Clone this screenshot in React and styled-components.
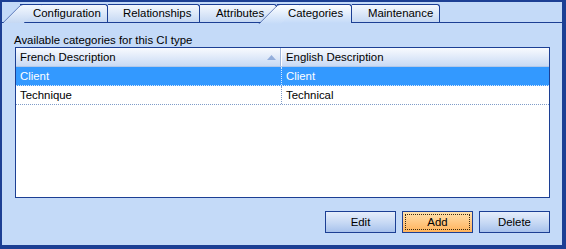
import React from "react";
import styled, { createGlobalStyle, css } from "styled-components";

const navy = "#1c3f94";
const panelBlue = "#c4daf8";

const GlobalStyle = createGlobalStyle`
  html, body {
    margin: 0;
    padding: 0;
    background: ${panelBlue};
  }
  * {
    box-sizing: border-box;
  }
`;

const Frame = styled.div`
  width: 566px;
  height: 249px;
  display: flex;
  flex-direction: column;
  border-style: solid;
  border-color: ${navy};
  border-width: 2px 4px 4px 2px;
  background: ${panelBlue};
  font-family: "Liberation Sans", Arial, sans-serif;
  font-size: 11.4px;
  color: #000;
`;

const TabStrip = styled.div`
  height: 20px;
  display: flex;
  align-items: flex-end;
  padding-left: 18px;
  position: relative;
  z-index: 1;
`;

const Tab = styled.div`
  position: relative;
  z-index: ${(p) => (p.$active ? 3 : 1)};
  width: ${(p) => p.$w}px;
  height: ${(p) => (p.$active ? 19 : 18)}px;
  margin-bottom: ${(p) => (p.$active ? -1 : 0)}px;
  padding-left: ${(p) => p.$pad}px;
  border-top: 1px solid ${navy};
  border-right: 1px solid ${navy};
  border-top-right-radius: 3px;
  line-height: 16px;
  white-space: nowrap;
  background: ${(p) =>
    p.$active
      ? `linear-gradient(#fdfeff, ${panelBlue})`
      : "linear-gradient(#f4f8fe, #c5d8f3)"};

  ${(p) =>
    p.$slant &&
    css`
      &::before {
        content: "";
        position: absolute;
        z-index: -1;
        top: -1px;
        left: -${p.$active ? 19 : 18}px;
        width: ${p.$active ? 22 : 21}px;
        height: ${p.$active ? 19 : 18}px;
        border-top: 1px solid ${navy};
        border-left: 1.4px solid ${navy};
        border-top-left-radius: 3px;
        background: inherit;
        transform-origin: bottom left;
        transform: skewX(-45deg);
      }
    `}
`;

const Panel = styled.div`
  flex: 1;
  display: flex;
  flex-direction: column;
  border-top: 1px solid ${navy};
  padding: 10px 12px 12px 12px;
`;

const Caption = styled.div`
  line-height: 14px;
  height: 14px;
`;

const ListView = styled.div`
  height: 151px;
  margin-left: 1px;
  border: 1px solid ${navy};
  background: #fff;
  display: flex;
  flex-direction: column;
`;

const Columns = styled.div`
  display: grid;
  grid-template-columns: 266px 1fr;
`;

const Header = styled(Columns)`
  height: 19px;
  background: linear-gradient(#f8fafe, #dce7f8 60%, #c9daf4);
  border-bottom: 1px solid #b3c8e8;
`;

const HeadCell = styled.div`
  display: flex;
  align-items: center;
  justify-content: space-between;
  padding: 0 5px 0 4px;
  line-height: 18px;
  ${(p) =>
    p.$divider &&
    css`
      box-shadow: inset -1px 0 0 #9fb6dc;
      border-right: 1px solid #ffffff;
    `}
`;

const SortArrow = styled.svg`
  width: 9px;
  height: 5px;
  margin-top: 1px;
`;

const Row = styled(Columns)`
  height: 19px;
  background: ${(p) => (p.$selected ? "#3399ff" : "#fff")};
  color: ${(p) => (p.$selected ? "#fff" : "#000")};
  border-bottom: 1px dotted ${(p) => (p.$selected ? "#d8e8ff" : "#7f9cc8")};
`;

const Cell = styled.div`
  padding-left: 4px;
  line-height: 18px;
  ${(p) =>
    p.$first &&
    css`
      border-right: 1px dotted ${p.$selected ? "#d8e8ff" : "#7f9cc8"};
    `}
`;

const ButtonBar = styled.div`
  margin-top: 13px;
  display: flex;
  justify-content: flex-end;
  gap: 6px;
`;

const Button = styled.div`
  position: relative;
  width: 71px;
  height: 22px;
  border: 1px solid ${navy};
  display: flex;
  align-items: center;
  justify-content: center;
  background: ${(p) =>
    p.$focused
      ? "linear-gradient(#ffe2ad, #ffc680 55%, #ffb45c)"
      : "linear-gradient(#e6eefb, #c6d8f4 55%, #a7c2ec)"};

  ${(p) =>
    p.$focused &&
    css`
      &::after {
        content: "";
        position: absolute;
        inset: 2px;
        border: 1px dotted #3a2a10;
      }
    `}
`;

const tabs = [
  { label: "Configuration", w: 88, pad: 13, slant: true },
  { label: "Relationships", w: 92, pad: 15 },
  { label: "Attributes", w: 77, pad: 16 },
  { label: "Categories", w: 75, pad: 11, slant: true, active: true },
  { label: "Maintenance", w: 88, pad: 16 },
];

const rows = [
  { fr: "Client", en: "Client", selected: true },
  { fr: "Technique", en: "Technical" },
];

export default function App() {
  return (
    <>
      <GlobalStyle />
      <Frame>
        <TabStrip>
          {tabs.map((t) => (
            <Tab key={t.label} $w={t.w} $pad={t.pad} $slant={t.slant} $active={t.active}>
              {t.label}
            </Tab>
          ))}
        </TabStrip>
        <Panel>
          <Caption>Available categories for this CI type</Caption>
          <ListView>
            <Header>
              <HeadCell $divider>
                <span>French Description</span>
                <SortArrow viewBox="0 0 9 5">
                  <polygon points="0,5 4.5,0 9,5" fill="#94aedb" />
                </SortArrow>
              </HeadCell>
              <HeadCell>
                <span>English Description</span>
              </HeadCell>
            </Header>
            {rows.map((r) => (
              <Row key={r.fr} $selected={r.selected}>
                <Cell $first $selected={r.selected}>{r.fr}</Cell>
                <Cell>{r.en}</Cell>
              </Row>
            ))}
          </ListView>
          <ButtonBar>
            <Button>Edit</Button>
            <Button $focused>Add</Button>
            <Button>Delete</Button>
          </ButtonBar>
        </Panel>
      </Frame>
    </>
  );
}
